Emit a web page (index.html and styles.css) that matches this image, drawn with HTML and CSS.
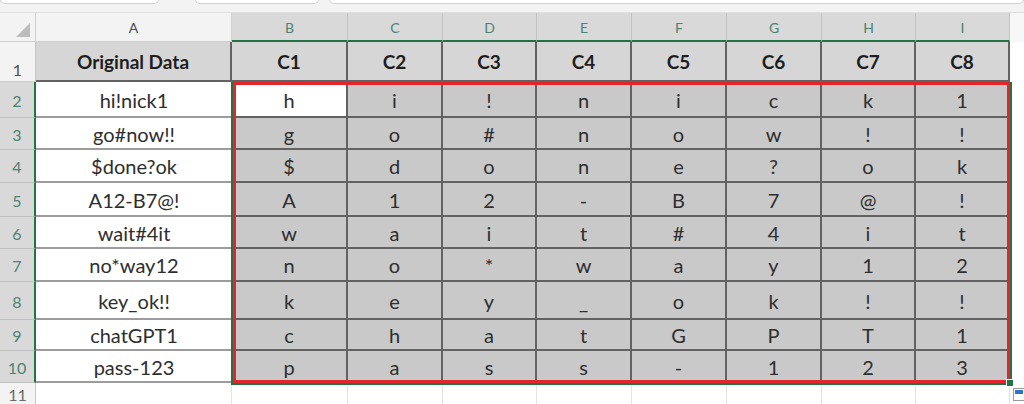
FILE: index.html
```html
<!DOCTYPE html>
<html>
<head>
<meta charset="utf-8">
<link rel="stylesheet" href="styles.css">
</head>
<body>
<div class="topbar">
  <div class="tb tb-name"></div>
  <div class="tb tb-mid"></div>
  <div class="tb tb-formula"></div>
</div>
<div class="sheet">
  <div class="corner"><svg width="14" height="14" viewBox="0 0 14 14"><polygon points="14,0 14,14 0,14" fill="#bdbdbd"/></svg></div>
  <div class="ch">A</div>
  <div class="ch sel">B</div><div class="ch sel">C</div><div class="ch sel">D</div><div class="ch sel">E</div>
  <div class="ch sel">F</div><div class="ch sel">G</div><div class="ch sel">H</div><div class="ch sel">I</div>
  <div class="ch end"></div>

  <div class="rh r1">1</div>
  <div class="c hd">Original Data</div>
  <div class="c hd">C1</div><div class="c hd">C2</div><div class="c hd">C3</div><div class="c hd">C4</div>
  <div class="c hd">C5</div><div class="c hd">C6</div><div class="c hd">C7</div><div class="c hd">C8</div>
  <div class="x"></div>

  <div class="rh sel">2</div><div class="c a">hi!nick1</div>
  <div class="c act">h</div><div class="c g">i</div><div class="c g">!</div><div class="c g">n</div><div class="c g">i</div><div class="c g">c</div><div class="c g">k</div><div class="c g">1</div>
  <div class="x"></div>

  <div class="rh sel">3</div><div class="c a">go#now!!</div>
  <div class="c g">g</div><div class="c g">o</div><div class="c g">#</div><div class="c g">n</div><div class="c g">o</div><div class="c g">w</div><div class="c g">!</div><div class="c g">!</div>
  <div class="x"></div>

  <div class="rh sel">4</div><div class="c a">$done?ok</div>
  <div class="c g">$</div><div class="c g">d</div><div class="c g">o</div><div class="c g">n</div><div class="c g">e</div><div class="c g">?</div><div class="c g">o</div><div class="c g">k</div>
  <div class="x"></div>

  <div class="rh sel">5</div><div class="c a">A12-B7@!</div>
  <div class="c g">A</div><div class="c g">1</div><div class="c g">2</div><div class="c g">-</div><div class="c g">B</div><div class="c g">7</div><div class="c g">@</div><div class="c g">!</div>
  <div class="x"></div>

  <div class="rh sel">6</div><div class="c a">wait#4it</div>
  <div class="c g">w</div><div class="c g">a</div><div class="c g">i</div><div class="c g">t</div><div class="c g">#</div><div class="c g">4</div><div class="c g">i</div><div class="c g">t</div>
  <div class="x"></div>

  <div class="rh sel">7</div><div class="c a">no*way12</div>
  <div class="c g">n</div><div class="c g">o</div><div class="c g">*</div><div class="c g">w</div><div class="c g">a</div><div class="c g">y</div><div class="c g">1</div><div class="c g">2</div>
  <div class="x"></div>

  <div class="rh sel">8</div><div class="c a">key_ok!!</div>
  <div class="c g">k</div><div class="c g">e</div><div class="c g">y</div><div class="c g">_</div><div class="c g">o</div><div class="c g">k</div><div class="c g">!</div><div class="c g">!</div>
  <div class="x"></div>

  <div class="rh sel">9</div><div class="c a">chatGPT1</div>
  <div class="c g">c</div><div class="c g">h</div><div class="c g">a</div><div class="c g">t</div><div class="c g">G</div><div class="c g">P</div><div class="c g">T</div><div class="c g">1</div>
  <div class="x"></div>

  <div class="rh sel">10</div><div class="c a">pass-123</div>
  <div class="c g">p</div><div class="c g">a</div><div class="c g">s</div><div class="c g">s</div><div class="c g">-</div><div class="c g">1</div><div class="c g">2</div><div class="c g">3</div>
  <div class="x"></div>

  <div class="rh r11">11</div>
  <div class="e"></div><div class="e"></div><div class="e"></div><div class="e"></div><div class="e"></div>
  <div class="e"></div><div class="e"></div><div class="e"></div><div class="e"></div>
  <div class="x qa-cell"><div class="qa"><span class="qa-top"></span></div></div>

  <div class="selection"><div class="redbox"></div><span class="handle"></span></div>
</div>
</body>
</html>
```

FILE: styles.css
```css
html, body {
  margin: 0;
  padding: 0;
  background: #ffffff;
  overflow: hidden;
}
body {
  width: 1024px;
  height: 404px;
  font-family: Lato, "Open Sans", sans-serif;
  color: #262626;
}
.topbar {
  height: 13px;
  background: #f3f3f3;
  display: flex;
  border-bottom: 1px solid #dedede;
  box-sizing: border-box;
  overflow: hidden;
}
.tb {
  height: 4px;
  margin-top: -1px;
  background: #ffffff;
  border: 1px solid #d2d2d2;
  border-top: 0;
  border-radius: 0 0 5px 5px;
}
.tb-name { width: 157px; }
.tb-mid { width: 122px; margin-left: 36px; }
.tb-formula { flex: 1; margin-left: 10px; }

.sheet {
  position: relative;
  display: grid;
  grid-template-columns: 36px 196px 116px 95px 94px 95px 95px 95px 94px 94px 1fr;
  grid-template-rows: 29px 40px 36px 32px 33px 34px 32px 33px 38px 31px 32px 21px;
}
.sheet > div { box-sizing: border-box; }

.corner {
  background: #f3f3f3;
  border-right: 1px solid #cfcfcf;
  border-bottom: 1px solid #cfcfcf;
  display: flex;
  align-items: flex-end;
  justify-content: flex-end;
  padding: 0 5px 4px 0;
}
.ch {
  background: #f3f3f3;
  border-right: 1px solid #d2d2d2;
  border-bottom: 1px solid #cfcfcf;
  display: flex;
  align-items: center;
  justify-content: center;
  font-size: 14px;
  color: #4a4a4a;
  padding-top: 1px;
}
.ch.sel {
  background: #d9d9d9;
  color: #4d8270;
  border-right-color: #c2c2c2;
  border-bottom: 2px solid #217346;
}
.ch.end {
  background: #f7f7f7;
  border-right: 0;
  border-bottom: 0;
}

.rh {
  background: #f3f3f3;
  border-bottom: 1px solid #cdcdcd;
  border-right: 1px solid #c6c6c6;
  display: flex;
  align-items: center;
  justify-content: center;
  font-size: 16px;
  color: #505050;
}
.rh.r1 {
  align-items: flex-end;
  padding-bottom: 2px;
}
.rh.sel {
  background: #d9d9d9;
  color: #4d8270;
  border-right: 2px solid #217346;
  border-bottom-color: #bfbfbf;
  padding-top: 1px;
}
.rh.r11 {
  align-items: flex-start;
  padding-top: 2px;
  color: #6a6a6a;
  border-bottom: 0;
}

.c {
  display: flex;
  align-items: center;
  justify-content: center;
  font-size: 20px;
  border-right: 2px solid #626262;
  border-bottom: 2px solid #626262;
  color: #2e2e2e;
  padding-top: 1px;
}
.c.hd {
  background: #d6d6d6;
  font-weight: 700;
  font-size: 19px;
  color: #1e1e1e;
}
.c.a {
  background: #ffffff;
  border-bottom-color: #9c9c9c;
  border-right: 0;
}
.c.g {
  background: #c9c9c9;
}
.c.act {
  background: #ffffff;
}
.x {
  background: #ffffff;
}
.e {
  background: #ffffff;
  border-right: 1px solid #e3e3e3;
}
.qa-cell {
  display: flex;
  align-items: flex-start;
  justify-content: flex-start;
  padding: 5px 0 0 3px;
}
.qa {
  width: 12px;
  height: 13px;
  border: 1px solid #9a9a9a;
  background: #ffffff;
  box-sizing: border-box;
  display: flex;
  flex-direction: column;
  padding: 1px;
}
.qa-top {
  height: 4px;
  background: #2f73c9;
}

.selection {
  position: absolute;
  grid-column: 3 / 11;
  grid-row: 3 / 12;
  top: 0;
  left: -1px;
  right: -2px;
  bottom: -2px;
  border: 2px solid #217346;
  border-top: 0;
  display: flex;
  pointer-events: none;
}
.redbox {
  flex: 1;
  border: 3px solid #e3262b;
}
.handle {
  position: absolute;
  right: -4px;
  bottom: -4px;
  width: 6px;
  height: 6px;
  background: #217346;
  border: 1px solid #ffffff;
}
```
